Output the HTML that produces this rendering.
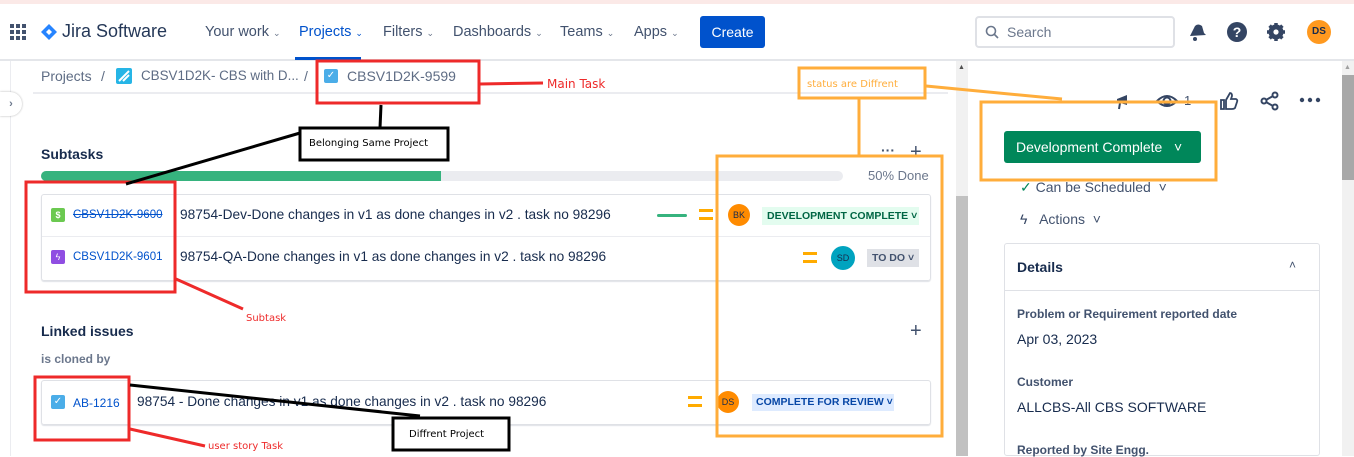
<!DOCTYPE html>
<html><head><meta charset="utf-8"><style>
*{margin:0;padding:0;box-sizing:border-box}
body{width:1354px;height:456px;overflow:hidden;background:#fff;font-family:"Liberation Sans",sans-serif;color:#172b4d;position:relative}
.a{position:absolute;white-space:nowrap}
.nav{font-size:14.5px;color:#42526e}
.chev{font-size:9px;color:#6b778c;margin-left:4px}
.lnk{color:#0052cc;font-size:12px}
.lz{font-size:13.7px;color:#172b4d}
.ann{font-size:11px;font-family:"DejaVu Sans",sans-serif}
</style></head><body>
<div class="a" style="left:0;top:0;width:1354px;height:4px;background:#fbe9e7"></div>
<!-- nav -->
<div class="a" style="left:0;top:59px;width:1354px;height:2px;background:#e4e6ea"></div>
<svg class="a" style="left:10px;top:24px" width="18" height="18"><g fill="#42526e"><rect x="0" y="0" width="4" height="4"/><rect x="6" y="0" width="4" height="4"/><rect x="12" y="0" width="4" height="4"/><rect x="0" y="6" width="4" height="4"/><rect x="6" y="6" width="4" height="4"/><rect x="12" y="6" width="4" height="4"/><rect x="0" y="12" width="4" height="4"/><rect x="6" y="12" width="4" height="4"/><rect x="12" y="12" width="4" height="4"/></g></svg>
<svg class="a" style="left:40px;top:23px" width="18" height="18"><path d="M9 1 L17 9 L9 17 L1 9 Z" fill="#2684ff"/><path d="M9 6 L12 9 L9 12 L6 9Z" fill="#fff"/></svg>
<div class="a" style="left:62px;top:21px;font-size:18px;color:#253858">Jira Software</div>
<div class="a nav" style="left:205px;top:24px">Your work<span class="chev">⌄</span></div>
<div class="a nav" style="left:299px;top:24px;color:#0052cc">Projects<span class="chev" style="color:#0052cc">⌄</span></div>
<div class="a" style="left:295px;top:57px;width:66px;height:3px;background:#0052cc"></div>
<div class="a nav" style="left:383px;top:24px">Filters<span class="chev">⌄</span></div>
<div class="a nav" style="left:453px;top:24px">Dashboards<span class="chev">⌄</span></div>
<div class="a nav" style="left:560px;top:24px">Teams<span class="chev">⌄</span></div>
<div class="a nav" style="left:634px;top:24px">Apps<span class="chev">⌄</span></div>
<div class="a" style="left:700px;top:16px;width:65px;height:32px;background:#0052cc;border-radius:3px;color:#fff;font-size:14px;text-align:center;line-height:32px">Create</div>
<div class="a" style="left:975px;top:16px;width:200px;height:32px;border:2px solid #dfe1e6;border-radius:4px"></div>
<svg class="a" style="left:985px;top:25px" width="14" height="14"><circle cx="6" cy="6" r="4.5" stroke="#6b778c" stroke-width="1.6" fill="none"/><line x1="9.5" y1="9.5" x2="13" y2="13" stroke="#6b778c" stroke-width="1.6"/></svg>
<div class="a" style="left:1007px;top:24px;font-size:14px;color:#6b778c">Search</div>
<svg class="a" style="left:1187px;top:22px" width="20" height="20"><path d="M3 14 L8 4 Q11 1 15 4 L17 11 L19 13 Z" fill="#344563"/><circle cx="8" cy="17" r="2" fill="#344563"/></svg>
<svg class="a" style="left:1227px;top:22px" width="20" height="20"><circle cx="10" cy="10" r="10" fill="#344563"/><text x="10" y="15" text-anchor="middle" font-size="14" font-weight="bold" fill="#fff" font-family="Liberation Sans">?</text></svg>
<svg class="a" style="left:1266px;top:22px" width="20" height="20"><circle cx="10" cy="10" r="6" stroke="#344563" stroke-width="3" fill="none"/><g stroke="#344563" stroke-width="3.5"><line x1="10" y1="1" x2="10" y2="19"/><line x1="1" y1="10" x2="19" y2="10"/><line x1="3.6" y1="3.6" x2="16.4" y2="16.4"/><line x1="16.4" y1="3.6" x2="3.6" y2="16.4"/></g><circle cx="10" cy="10" r="5" fill="#344563"/><circle cx="10" cy="10" r="2.6" fill="#fff"/></svg>
<div class="a" style="left:1307px;top:20px;width:24px;height:24px;border-radius:50%;background:#ff991f;color:#172b4d;font-size:10px;font-weight:bold;text-align:center;line-height:24px">DS</div>
<!-- left sidebar -->
<div class="a" style="left:10px;top:61px;width:1px;height:395px;background:#ebecf0"></div>
<div class="a" style="left:0;top:92px;width:22px;height:24px;border-radius:0 12px 12px 0;background:#fff;box-shadow:0 0 2px rgba(0,0,0,.3);color:#6b778c;font-size:11px;line-height:24px;text-align:center;font-weight:bold">›</div>
<!-- breadcrumb -->
<div class="a" style="left:41px;top:68px;font-size:14px;color:#5e6c84">Projects</div>
<div class="a" style="left:101px;top:68px;font-size:14px;color:#5e6c84">/</div>
<svg class="a" style="left:116px;top:68px" width="16" height="16"><rect width="16" height="16" rx="2" fill="#26b5e6"/><path d="M3 13 L13 3 M7 13 L13 7" stroke="#fff" stroke-width="2"/></svg>
<div class="a" style="left:141px;top:68px;font-size:13.4px;color:#5e6c84">CBSV1D2K- CBS with D...</div>
<div class="a" style="left:304px;top:68px;font-size:14px;color:#5e6c84">/</div>
<div class="a" style="left:324px;top:69px;width:14px;height:14px;background:#4bade8;border-radius:2px;color:#fff;font-size:10px;text-align:center;line-height:14px">✓</div>
<div class="a" style="left:347px;top:68px;font-size:14px;color:#5e6c84">CBSV1D2K-9599</div>
<div class="a" style="left:33px;top:92px;width:915px;height:2px;background:#ebecf0"></div>
<!-- subtasks -->
<div class="a" style="left:41px;top:146px;font-size:14px;font-weight:bold">Subtasks</div>
<div class="a" style="left:881px;top:142px;font-size:14px;color:#42526e;font-weight:bold">···</div>
<div class="a" style="left:910px;top:141px;font-size:20px;color:#42526e">+</div>
<div class="a" style="left:41px;top:171px;width:802px;height:10px;border-radius:5px;background:#ebecf0"></div>
<div class="a" style="left:41px;top:171px;width:400px;height:10px;border-radius:5px 0 0 5px;background:#36b37e"></div>
<div class="a" style="left:868px;top:168px;font-size:13px;color:#6b778c">50% Done</div>
<div class="a" style="left:41px;top:194px;width:890px;height:87px;border:1px solid #dfe1e6;border-radius:3px;box-shadow:0 1px 1px #dfe1e6"></div>
<div class="a" style="left:42px;top:236px;width:888px;height:1px;background:#ebecf0"></div>
<div class="a" style="left:51px;top:208px;width:14px;height:14px;background:#6bc950;border-radius:2px;color:#fff;font-size:9px;font-weight:bold;text-align:center;line-height:14px">$</div>
<div class="a lnk" style="left:73px;top:209px;text-decoration:line-through;font-size:11.5px">CBSV1D2K-9600</div>
<div class="a lz" style="left:180px;top:207px">98754-Dev-Done changes in v1 as done changes in v2 . task no 98296</div>
<div class="a" style="left:657px;top:214px;width:30px;height:3px;border-radius:2px;background:#36b37e"></div>
<div class="a" style="left:699px;top:209px;width:14px;height:3px;background:#ffab00"></div><div class="a" style="left:699px;top:217px;width:14px;height:3px;background:#ffab00"></div>
<div class="a" style="left:728px;top:204px;width:22px;height:22px;border-radius:50%;background:#ff8b00;font-size:9px;text-align:center;line-height:22px;color:#172b4d">BK</div>
<div class="a" style="left:762px;top:207px;width:157px;height:18px;background:#e3fcef;color:#006644;font-size:10.5px;font-weight:bold;line-height:18px;padding-left:5px">DEVELOPMENT COMPLETE ˅</div>
<div class="a" style="left:51px;top:250px;width:14px;height:14px;background:#904ee2;border-radius:2px;color:#fff;font-size:9px;text-align:center;line-height:14px">ϟ</div>
<div class="a lnk" style="left:73px;top:251px;font-size:11.5px">CBSV1D2K-9601</div>
<div class="a lz" style="left:180px;top:249px">98754-QA-Done changes in v1 as done changes in v2 . task no 98296</div>
<div class="a" style="left:803px;top:252px;width:14px;height:3px;background:#ffab00"></div><div class="a" style="left:803px;top:260px;width:14px;height:3px;background:#ffab00"></div>
<div class="a" style="left:831px;top:246px;width:24px;height:24px;border-radius:50%;background:#00a3bf;font-size:9px;text-align:center;line-height:24px;color:#172b4d">SD</div>
<div class="a" style="left:867px;top:249px;width:52px;height:18px;background:#dfe1e6;color:#42526e;font-size:10.5px;font-weight:bold;line-height:18px;padding-left:5px">TO DO ˅</div>
<!-- linked -->
<div class="a" style="left:41px;top:323px;font-size:14px;font-weight:bold">Linked issues</div>
<div class="a" style="left:910px;top:320px;font-size:20px;color:#42526e">+</div>
<div class="a" style="left:41px;top:352px;font-size:12px;color:#6b778c;font-weight:bold">is cloned by</div>
<div class="a" style="left:41px;top:380px;width:890px;height:45px;border:1px solid #dfe1e6;border-radius:3px;box-shadow:0 1px 1px #dfe1e6"></div>
<div class="a" style="left:51px;top:395px;width:14px;height:14px;background:#4bade8;border-radius:2px;color:#fff;font-size:10px;text-align:center;line-height:14px">✓</div>
<div class="a lnk" style="left:73px;top:396px">AB-1216</div>
<div class="a lz" style="left:137px;top:394px">98754 - Done changes in v1 as done changes in v2 . task no 98296</div>
<div class="a" style="left:688px;top:396px;width:14px;height:3px;background:#ffab00"></div><div class="a" style="left:688px;top:404px;width:14px;height:3px;background:#ffab00"></div>
<div class="a" style="left:717px;top:391px;width:22px;height:22px;border-radius:50%;background:#ff8b00;font-size:9px;text-align:center;line-height:22px;color:#172b4d">DS</div>
<div class="a" style="left:752px;top:394px;width:142px;height:17px;background:#deebff;color:#0747a6;font-size:10.5px;font-weight:bold;line-height:17px;padding-left:4px">COMPLETE FOR REVIEW ˅</div>
<!-- middle scrollbar -->
<div class="a" style="left:956px;top:61px;width:12px;height:395px;background:#f1f1f1"></div>
<div class="a" style="left:956px;top:196px;width:12px;height:260px;background:#c1c1c1"></div>
<div class="a" style="left:958px;top:64px;font-size:7px;color:#505050">▲</div>
<!-- right panel -->
<svg class="a" style="left:1113px;top:91px" width="20" height="20"><path d="M4 8 L14 4 L14 14 L4 11 Z" fill="#344563"/><path d="M7 12 L6 18" stroke="#344563" stroke-width="2"/></svg>
<svg class="a" style="left:1156px;top:91px" width="22" height="20"><path d="M1 10 Q11 0 21 10 Q11 20 1 10Z" stroke="#344563" stroke-width="2" fill="none"/><circle cx="11" cy="10" r="3.5" stroke="#344563" stroke-width="2" fill="none"/></svg>
<div class="a" style="left:1184px;top:93px;font-size:13px;color:#42526e">1</div>
<svg class="a" style="left:1219px;top:91px" width="20" height="20"><path d="M2 9 H5 V18 H2Z M7 9 L11 2 Q13 2 13 5 L12 8 H17 Q19 9 18 11 L16 17 Q15 18 13 18 H7Z" stroke="#344563" stroke-width="1.8" fill="none"/></svg>
<svg class="a" style="left:1260px;top:91px" width="20" height="20"><g stroke="#344563" stroke-width="2" fill="none"><circle cx="15" cy="4" r="2.5"/><circle cx="4" cy="10" r="2.5"/><circle cx="15" cy="16" r="2.5"/><path d="M6 9 L13 5 M6 11 L13 15"/></g></svg>
<svg class="a" style="left:1299px;top:97px" width="22" height="6"><g fill="#344563"><circle cx="3" cy="3" r="2.2"/><circle cx="11" cy="3" r="2.2"/><circle cx="19" cy="3" r="2.2"/></g></svg>
<div class="a" style="left:1004px;top:131px;width:197px;height:32px;background:#00875a;border-radius:3px;color:#fff;font-size:14px;line-height:32px;padding-left:12px">Development Complete&nbsp;&nbsp;&nbsp;˅</div>
<div class="a" style="left:1020px;top:179px;font-size:14px;color:#42526e"><span style="color:#00875a">✓</span> Can be Scheduled&nbsp;&nbsp;˅</div>
<div class="a" style="left:1020px;top:211px;font-size:14px;color:#42526e"><span style="color:#344563">ϟ</span>&nbsp;&nbsp; Actions&nbsp;&nbsp;˅</div>
<div class="a" style="left:1004px;top:243px;width:316px;height:213px;border:1px solid #dfe1e6;border-radius:3px"></div>
<div class="a" style="left:1005px;top:290px;width:314px;height:1px;background:#dfe1e6"></div>
<div class="a" style="left:1017px;top:259px;font-size:14px;font-weight:bold">Details</div>
<div class="a" style="left:1289px;top:258px;font-size:12px;color:#42526e">˄</div>
<div class="a" style="left:1017px;top:307px;font-size:12px;color:#42526e;font-weight:bold">Problem or Requirement reported date</div>
<div class="a" style="left:1017px;top:331px;font-size:14px">Apr 03, 2023</div>
<div class="a" style="left:1017px;top:375px;font-size:12px;color:#42526e;font-weight:bold">Customer</div>
<div class="a" style="left:1017px;top:399px;font-size:14px">ALLCBS-All CBS SOFTWARE</div>
<div class="a" style="left:1017px;top:443px;font-size:12px;color:#42526e;font-weight:bold">Reported by Site Engg.</div>
<div class="a" style="left:1342px;top:61px;width:12px;height:395px;background:#f1f1f1"></div>
<div class="a" style="left:1342px;top:75px;width:12px;height:105px;background:#a8a8a8"></div>
<div class="a" style="left:1344px;top:64px;font-size:7px;color:#a0a0a0">▲</div>
<!-- annotations -->
<svg class="a" style="left:0;top:0" width="1354" height="456">
<g fill="none" stroke="#ee2a2a" stroke-width="3">
<rect x="317" y="61" width="162" height="42"/>
<rect x="26" y="182" width="149" height="110"/>
<rect x="35" y="377" width="94" height="63"/>
<line x1="480" y1="84" x2="543" y2="83"/>
<line x1="176" y1="279" x2="243" y2="309"/>
<line x1="130" y1="429" x2="205" y2="446"/>
</g>
<g fill="none" stroke="#000" stroke-width="3">
<line x1="381" y1="105" x2="380" y2="128"/>
<line x1="300" y1="133" x2="126" y2="184"/>
<line x1="130" y1="385" x2="420" y2="416"/>
<rect x="300" y="128" width="148" height="32" fill="#fff"/>
<rect x="393" y="418" width="116" height="32" fill="#fff"/>
</g>
<g fill="none" stroke="#ffad3b" stroke-width="3">
<rect x="799" y="68" width="126" height="30"/>
<line x1="926" y1="86" x2="1062" y2="99"/>
<line x1="859" y1="98" x2="859" y2="155"/>
<rect x="717" y="156" width="225" height="280"/>
<rect x="981" y="102" width="235" height="78"/>
</g>
</svg>
<div class="a ann" style="left:547px;top:77px;color:#ee2a2a;font-size:12px">Main Task</div>
<div class="a ann" style="left:309px;top:138px;color:#000;font-size:10px">Belonging Same Project</div>
<div class="a ann" style="left:246px;top:313px;color:#ee2a2a;font-size:10px">Subtask</div>
<div class="a ann" style="left:208px;top:441px;color:#ee2a2a;font-size:10px">user story Task</div>
<div class="a ann" style="left:409px;top:429px;color:#000;font-size:10px">Diffrent Project</div>
<div class="a ann" style="left:807px;top:79px;color:#ffad3b;font-size:10px">status are Diffrent</div>
</body></html>
